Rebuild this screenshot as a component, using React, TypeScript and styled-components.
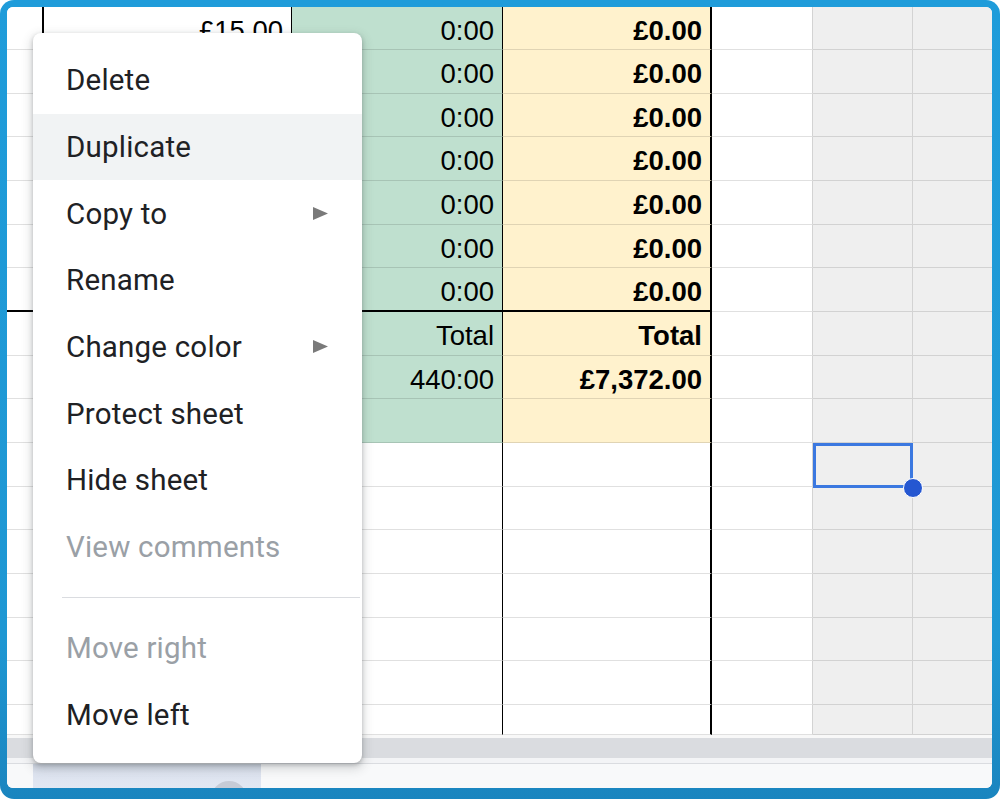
import styled, { createGlobalStyle } from "styled-components";

const GlobalStyle = createGlobalStyle`
  html, body {
    margin: 0;
    padding: 0;
    background: #ffffff;
  }
  * {
    box-sizing: border-box;
  }
`;

type Fill = "white" | "green" | "yellow" | "grey";

type ColumnSpec = {
  width: number;
  edge: "thin" | "thick" | "grid" | "none";
  bold?: boolean;
};

const columns: ColumnSpec[] = [
  { width: 37, edge: "thick" },
  { width: 248, edge: "thin" },
  { width: 211, edge: "thin" },
  { width: 209, edge: "thick", bold: true },
  { width: 101, edge: "grid" },
  { width: 100, edge: "grid" },
  { width: 79, edge: "none" },
];

const ROW_COUNT = 17;

const cellText: Record<string, string> = {
  "0-1": "£15.00",
  "7-2": "Total",
  "7-3": "Total",
  "8-2": "440:00",
  "8-3": "£7,372.00",
};
for (let r = 0; r < 7; r++) {
  cellText[`${r}-2`] = "0:00";
  cellText[`${r}-3`] = "£0.00";
}

const fillFor = (row: number, col: number): Fill => {
  if (col >= 5) return "grey";
  if (row <= 9 && col === 2) return "green";
  if (row <= 9 && col === 3) return "yellow";
  return "white";
};

const menuItems = [
  { label: "Delete" },
  { label: "Duplicate", active: true },
  { label: "Copy to", sub: true },
  { label: "Rename" },
  { label: "Change color", sub: true },
  { label: "Protect sheet" },
  { label: "Hide sheet" },
  { label: "View comments", disabled: true },
  { divider: true },
  { label: "Move right", disabled: true },
  { label: "Move left" },
];

export default function App() {
  return (
    <>
      <GlobalStyle />
      <StFrame>
        <StWindow>
          <StSheet>
            {Array.from({ length: ROW_COUNT }).map((_, row) =>
              columns.map((col, c) => (
                <StCell
                  key={`${row}-${c}`}
                  $fill={fillFor(row, c)}
                  $edge={col.edge}
                  $bold={!!col.bold}
                  $heavyBottom={row === 6 && c <= 3}
                >
                  {cellText[`${row}-${c}`]}
                </StCell>
              ))
            )}
            <StSelection />
          </StSheet>
          <StGap />
          <StScrollbar />
          <StStrip />
          <StTabBar>
            <StActiveTab>
              <StTabButton />
            </StActiveTab>
          </StTabBar>

          <StMenu>
            {menuItems.map((item, i) =>
              item.divider ? (
                <StDivider key={i} />
              ) : (
                <StItem
                  key={i}
                  $active={!!item.active}
                  $disabled={!!item.disabled}
                >
                  {item.label}
                  {item.sub && (
                    <StArrow viewBox="0 0 15 13">
                      <polygon points="0,0 15,6.5 0,13" />
                    </StArrow>
                  )}
                </StItem>
              )
            )}
          </StMenu>
        </StWindow>
      </StFrame>
    </>
  );
}

const StFrame = styled.div`
  width: 1000px;
  height: 799px;
  padding: 7px 8px 11px 7px;
  background: linear-gradient(#1f9cda, #1e97d3 80%, #1a85bf);
  border-radius: 14px;
`;

const StWindow = styled.div`
  position: relative;
  width: 100%;
  height: 100%;
  display: flex;
  flex-direction: column;
  background: #ffffff;
  border-radius: 6px;
  overflow: hidden;
`;

const StSheet = styled.div`
  position: relative;
  display: grid;
  grid-template-columns: ${columns.map((c) => `${c.width}px`).join(" ")};
  grid-template-rows: 43px repeat(15, 43.67px) 1fr;
  height: 728px;
  overflow: hidden;
`;

const fillColors: Record<Fill, string> = {
  white: "#ffffff",
  green: "#bfe0cf",
  yellow: "#fff2cd",
  grey: "#efefef",
};

const edgeStyles = {
  thin: "1.5px solid #000000",
  thick: "2.5px solid #000000",
  grid: "1px solid #d3d3d3",
  none: "0",
};

const StCell = styled.div<{
  $fill: Fill;
  $edge: ColumnSpec["edge"];
  $bold: boolean;
  $heavyBottom: boolean;
}>`
  background: ${(p) => fillColors[p.$fill]};
  border-right: ${(p) => edgeStyles[p.$edge]};
  border-bottom: ${(p) =>
    p.$heavyBottom ? "2.5px solid #000000" : "1px solid rgba(0, 0, 0, 0.12)"};
  padding-right: 8px;
  text-align: right;
  white-space: nowrap;
  font-family: "Liberation Sans", Arial, sans-serif;
  font-size: 27.5px;
  line-height: 48px;
  font-weight: ${(p) => (p.$bold ? 700 : 400)};
  color: #000000;
`;

const StSelection = styled.div`
  position: absolute;
  left: 806px;
  top: 436px;
  width: 100px;
  height: 45px;
  border: 3px solid #3b78e0;

  &::after {
    content: "";
    position: absolute;
    right: -13px;
    bottom: -13px;
    width: 18px;
    height: 18px;
    border-radius: 50%;
    background: #2557d1;
    border: 1.5px solid #ffffff;
  }
`;

const StGap = styled.div`
  height: 3px;
  background: #f8f8f8;
`;

const StScrollbar = styled.div`
  height: 20px;
  background: #dadce0;
`;

const StStrip = styled.div`
  height: 5px;
  background: #f3f4f6;
  border-bottom: 1px solid #dadce0;
  box-sizing: content-box;
`;

const StTabBar = styled.div`
  flex: 1;
  display: flex;
  padding-left: 26px;
  background: #f8f9fa;
`;

const StActiveTab = styled.div`
  position: relative;
  width: 228px;
  background: linear-gradient(#cdd4e0, #dde3ef 40%, #e1e7f2);
`;

const StTabButton = styled.div`
  position: absolute;
  left: 178px;
  top: 17px;
  width: 36px;
  height: 36px;
  border-radius: 50%;
  background: #c6cbd6;
`;

const StMenu = styled.div`
  position: absolute;
  left: 26px;
  top: 26px;
  width: 329px;
  height: 730px;
  padding: 14px 0;
  background: #ffffff;
  border-radius: 8px;
  box-shadow: 0 4px 10px 3px rgba(60, 64, 67, 0.15),
    0 2px 4px rgba(60, 64, 67, 0.3);
  font-family: Roboto, "Noto Sans", sans-serif;
`;

const StItem = styled.div<{ $active: boolean; $disabled: boolean }>`
  display: flex;
  align-items: center;
  justify-content: space-between;
  height: 66.67px;
  padding: 0 34px 0 33px;
  background: ${(p) => (p.$active ? "#f1f3f4" : "transparent")};
  color: ${(p) => (p.$disabled ? "#9aa0a6" : "#202124")};
  font-size: 29.5px;
  letter-spacing: 0.2px;
  white-space: nowrap;
`;

const StArrow = styled.svg`
  width: 15px;
  height: 13px;
  fill: #7a7a7a;
`;

const StDivider = styled.div`
  height: 34.7px;
  display: flex;
  align-items: center;
  margin: 0 2px 0 29px;

  &::before {
    content: "";
    flex: 1;
    height: 1.5px;
    background: #dadce0;
  }
`;
